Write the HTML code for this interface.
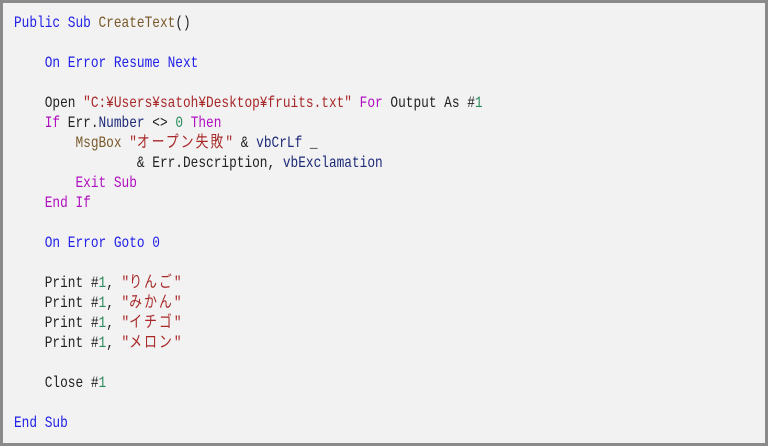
<!DOCTYPE html>
<html><head><meta charset="utf-8"><style>
html,body{margin:0;padding:0;}
body{width:768px;height:446px;background:#fff;}
.box{position:absolute;left:0;top:0;width:762px;height:440px;border:3px solid #8a8a8a;background:#f2f2f2;overflow:hidden;}
pre{margin:0;position:absolute;left:11px;top:10px;font-family:"Liberation Mono","Noto Sans CJK JP",monospace;font-size:16px;letter-spacing:0px;line-height:20px;color:#222;transform:scaleX(0.8);transform-origin:0 0;}
.k{color:#2020e8}.p{color:#b010c0}.f{color:#7a5a2a}.s{color:#a82828}.n{color:#2a8a5a}.v{color:#1c2a78}
.j{letter-spacing:2.6px}
</style></head><body><div class="box"><pre><span class="k">Public Sub</span> <span class="f">CreateText</span>()

    <span class="k">On Error Resume Next</span>

    Open <span class="s">"C:¥Users¥satoh¥Desktop¥fruits.txt"</span> <span class="p">For</span> Output As #<span class="n">1</span>
    <span class="p">If</span> Err.<span class="v">Number</span> &lt;&gt; <span class="n">0</span> <span class="p">Then</span>
        <span class="f">MsgBox</span> <span class="s">"<span class="j">オープン失敗</span>"</span> &amp; <span class="v">vbCrLf</span> _
                &amp; Err.Description, <span class="v">vbExclamation</span>
        <span class="p">Exit Sub</span>
    <span class="p">End If</span>

    <span class="k">On Error Goto 0</span>

    Print #<span class="n">1</span>, <span class="s">"<span class="j">りんご</span>"</span>
    Print #<span class="n">1</span>, <span class="s">"<span class="j">みかん</span>"</span>
    Print #<span class="n">1</span>, <span class="s">"<span class="j">イチゴ</span>"</span>
    Print #<span class="n">1</span>, <span class="s">"<span class="j">メロン</span>"</span>

    Close #<span class="n">1</span>

<span class="k">End Sub</span></pre></div></body></html>
